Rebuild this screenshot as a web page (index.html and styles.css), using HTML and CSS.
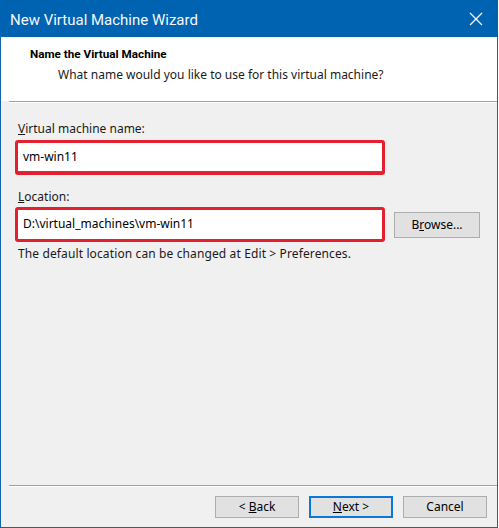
FILE: index.html
```html
<html>
<head>
  <link rel="stylesheet" href="styles.css">
</head>
<body>
  <div class="window">
    <!-- Title bar -->
    <div class="titlebar">
      <span class="title">New Virtual Machine Wizard</span>
      <svg class="close" width="14" height="14" viewBox="0 0 14 14">
        <path d="M1 1 L13 13 M13 1 L1 13" stroke="#ffffff" stroke-width="1.3" fill="none"/>
      </svg>
    </div>

    <!-- Page header -->
    <div class="header">
      <div class="header-title">Name the Virtual Machine</div>
      <div class="header-sub">What name would you like to use for this virtual machine?</div>
    </div>
    <div class="separator"></div>

    <!-- Form -->
    <div class="content">
      <div class="label"><u>V</u>irtual machine name:</div>
      <div class="highlight">
        <div class="textbox focused">vm-win11</div>
      </div>

      <div class="label second"><u>L</u>ocation:</div>
      <div class="row">
        <div class="highlight">
          <div class="textbox">D:\virtual_machines\vm-win11</div>
        </div>
        <div class="button browse">B<u>r</u>owse...</div>
      </div>
      <div class="hint">The default location can be changed at Edit &gt; Preferences.</div>
    </div>

    <!-- Footer -->
    <div class="separator"></div>
    <div class="footer">
      <div class="button">&lt; <u>B</u>ack</div>
      <div class="button default"><u>N</u>ext &gt;</div>
      <div class="button">Cancel</div>
    </div>
  </div>
</body>
</html>
```

FILE: styles.css
```css
/* General styling */
body {
  margin: 0;
  background-color: #ffffff;
  font-family: 'Noto Sans', 'Open Sans', sans-serif;
  font-size: 12px;
  color: #1a1a1a;
}

.window {
  width: 496px;
  height: 527px;
  border: 1px solid #1565ad;
  border-top: none;
  background-color: #f0f0f0;
  display: flex;
  flex-direction: column;
}

/* Title bar */
.titlebar {
  height: 37px;
  box-sizing: border-box;
  margin: 0 -1px;
  background-color: #0063b1;
  display: flex;
  align-items: center;
  justify-content: space-between;
  padding: 2px 15px 0 10px;
  color: #f4f8fc;
}

.title {
  font-family: 'Roboto', 'Noto Sans', sans-serif;
  font-size: 15px;
}

.close {
  margin-top: -2px;
}

/* Header */
.header {
  height: 64px;
  background-color: #ffffff;
  box-sizing: border-box;
  padding: 9px 0 0 29px;
}

.header-title {
  font-family: 'Roboto', 'Noto Sans', sans-serif;
  font-weight: bold;
  font-size: 11.7px;
  line-height: 17px;
  color: #000000;
}

.header-sub {
  padding-left: 28px;
  margin-top: 3px;
  line-height: 17px;
  color: #1a1a1a;
}

.separator {
  height: 1px;
  background-color: #a0a0a0;
  border-bottom: 1px solid #ffffff;
  margin-left: 8px;
}

/* Form */
.content {
  flex: 1;
  padding: 17px 0 0 14px;
}

.label {
  height: 17px;
  line-height: 17px;
  padding-left: 3px;
  margin-bottom: 3px;
}

.label.second {
  margin-top: 13px;
  margin-bottom: 2px;
}

.highlight {
  width: 364px;
  border: 3px solid #e3202e;
  border-radius: 3px;
  background-color: #ffffff;
}

.textbox {
  height: 28px;
  line-height: 28px;
  padding-left: 5px;
  border-bottom: 1px solid #ffffff;
  color: #000000;
}

.textbox.focused {
  border-bottom: 1px solid #0a78d2;
}

.row {
  display: flex;
  align-items: center;
}

.hint {
  margin-top: 3px;
  padding-left: 3px;
  line-height: 17px;
  letter-spacing: 0.12px;
}

/* Buttons */
.button {
  width: 84px;
  height: 22px;
  box-sizing: border-box;
  border: 1px solid #adadad;
  background-color: #e1e1e1;
  text-align: center;
  line-height: 20px;
  color: #000000;
}

.button.browse {
  width: 86px;
  height: 26px;
  line-height: 24px;
  margin-left: 9px;
}

.button.default {
  border: 2px solid #0a78d7;
  line-height: 18px;
}

.footer {
  height: 40px;
  display: flex;
  justify-content: flex-end;
  align-items: center;
  gap: 10px;
  padding-right: 10px;
}
```
